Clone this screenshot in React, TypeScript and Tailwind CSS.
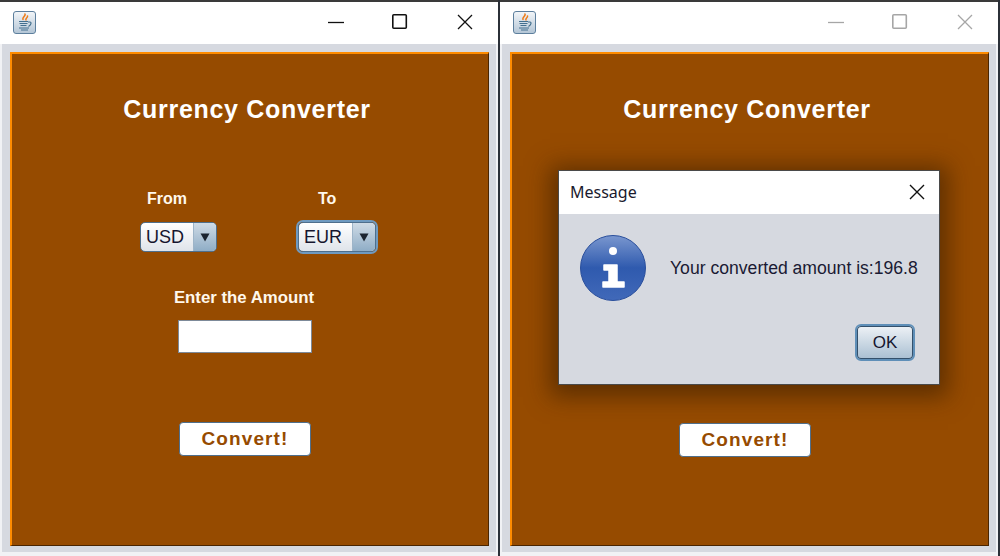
import type { ReactNode } from "react";

const sans = "font-['Liberation_Sans',Arial,sans-serif]";

function JavaIcon() {
  return (
    <div className="flex h-[23px] w-[23px] items-center justify-center rounded-[3px] border border-[#5d7f9d] bg-gradient-to-b from-[#f2f5f8] to-[#b4c6d6]">
      <svg width="17" height="19" viewBox="0 0 17 19" fill="none">
        <path d="M9 1c1 2-3 3-2 5.500M11.500 3c.5 2-2.500 2-1.500 4" stroke="#ee7a16" strokeWidth="1.500" strokeLinecap="round" />
        <path d="M3 8.500h9M3.500 10.500h8M4.500 12.500h6" stroke="#44708f" strokeWidth="1.200" />
        <path d="M12 9h2c1.500 0 1.500 3-1.500 4.500" stroke="#44708f" strokeWidth="1.200" />
        <path d="M3 15h10M5 17h7" stroke="#44708f" strokeWidth="1.200" />
      </svg>
    </div>
  );
}

function TitleButtons({ dim }: { dim?: boolean }) {
  const stroke = dim ? "#a6a6a6" : "#111111";
  return (
    <div className="flex items-center">
      <svg width="16" height="16" viewBox="0 0 16 16" className="mr-[48px]">
        <path d="M0 8.500h16" stroke={stroke} strokeWidth="1.300" />
      </svg>
      <svg width="16" height="16" viewBox="0 0 16 16" className="mr-[49px]">
        <rect x="0.800" y="0.800" width="13.500" height="13.500" rx="1" fill="none" stroke={stroke} strokeWidth="1.600" />
      </svg>
      <svg width="16" height="16" viewBox="0 0 16 16">
        <path d="M1 1l14 14M15 1L1 15" stroke={stroke} strokeWidth="1.300" />
      </svg>
    </div>
  );
}

function Combo({ value, focused }: { value: string; focused?: boolean }) {
  return (
    <div className={`flex h-[30px] overflow-hidden rounded-[5px] border border-[#4f6f8c] bg-gradient-to-b from-[#ffffff] to-[#dfe4ea] ${focused ? "w-[78px] shadow-[0_0_0_2px_#6f9ac0]" : "w-[77px]"}`}>
      <div className={`${sans} flex flex-1 items-center pl-[5px] text-[18px] text-[#15152e]`}>{value}</div>
      <div className="flex w-[23px] items-center justify-center border-l border-[#9db4c8] bg-gradient-to-b from-[#cfdbe6] to-[#8fadc6]">
        <svg width="10" height="9" viewBox="0 0 10 9">
          <path d="M0.500 0.500h9L5 8.500z" fill="#1b2430" />
        </svg>
      </div>
    </div>
  );
}

function Dialog() {
  return (
    <div className="absolute left-[46px] top-[116px] w-[382px] border border-[#4a4a4a] bg-[#d6d9e0] shadow-[0_4px_22px_8px_rgba(50,25,0,0.55)]">
      <div className="flex h-[43px] items-center justify-between bg-white pb-[1px] pl-[11px] pr-[14px] font-['Noto_Sans',sans-serif] text-[16px] text-[#1a1a2e]">
        <span>Message</span>
        <svg width="16" height="16" viewBox="0 0 16 16">
          <path d="M1 1l14 14M15 1L1 15" stroke="#111111" strokeWidth="1.400" />
        </svg>
      </div>
      <div className="flex h-[170px] flex-col px-[21px] pt-[21px]">
        <div className="flex items-center">
          <svg width="66" height="66" viewBox="0 0 66 66" className="mr-[24px]">
            <defs>
              <linearGradient id="infoBg" x1="0" y1="0" x2="0" y2="1">
                <stop offset="0" stopColor="#7a97cf" />
                <stop offset="0.5" stopColor="#2f5aae" />
                <stop offset="1" stopColor="#4169b9" />
              </linearGradient>
            </defs>
            <circle cx="33" cy="33" r="32.500" fill="url(#infoBg)" stroke="#2a4f9c" />
            <circle cx="33" cy="16" r="4" fill="#ffffff" />
            <path d="M24 30h13v17h7v5H23v-5h6V35h-5z" fill="#ffffff" stroke="#ffffff" strokeWidth="1.500" strokeLinejoin="round" />
          </svg>
          <span className={`${sans} text-[17.600px] text-[#1a1a33]`}>Your converted amount is:196.8</span>
        </div>
        <div className="mt-[23px] flex justify-end pr-[3px]">
          <div className={`${sans} flex h-[37px] w-[60px] items-center justify-center rounded-[6px] border-2 border-[#5f8fb8] bg-gradient-to-b from-[#eef2f6] to-[#a9bfd2] text-[17px] text-[#15152e] ring-1 ring-inset ring-[#34506b]`}>
            OK
          </div>
        </div>
      </div>
    </div>
  );
}

function Window({ dim, dropY = 0, children }: { dim?: boolean; dropY?: number; children?: ReactNode }) {
  return (
    <div className="flex h-[556px] w-[498px] flex-col border-t-2 border-[#3a3a3a] bg-[#f1f2f5]">
      <div className="flex h-[42px] shrink-0 items-center justify-between bg-white pb-[2px] pl-[13px] pr-[25px]">
        <JavaIcon />
        <TitleButtons dim={dim} />
      </div>
      <div className="mx-[2px] mb-[4px] flex-1 bg-[#d6d9e0] pl-[8px] pr-[7px] pt-[8px]">
        <div className={`relative flex h-[494px] flex-col border-b border-l-2 border-r border-t-2 border-b-[#4a2500] border-l-[#ff8c00] border-r-[#4a2500] border-t-[#ff8c00] bg-[#964b00] ${sans}`}>
          <h1 className="mt-[41px] h-[28px] pr-[6px] text-center text-[25px] font-bold leading-[28px] tracking-[0.7px] text-white">
            Currency Converter
          </h1>
          <div className={`mt-[65px] flex pl-[128px] ${children ? "invisible" : ""}`}>
            <div className="flex flex-col">
              <span className="h-[22px] pl-[7px] text-[16px] font-bold leading-[22px] text-[#fff8ec]">From</span>
              <div className="mt-[12px]">
                <Combo value="USD" />
              </div>
            </div>
            <div className="ml-[81px] flex flex-col">
              <span className="h-[22px] pl-[20px] text-[16px] font-bold leading-[22px] text-[#fff8ec]">To</span>
              <div className="mt-[12px]">
                <Combo value="EUR" focused />
              </div>
            </div>
          </div>
          <div className={`flex flex-col items-center pr-[12px] ${children ? "invisible" : ""}`}>
            <span className="mt-[35px] h-[22px] text-[16.800px] font-bold leading-[22px] text-[#fff8ec]">Enter the Amount</span>
            <div className="ml-[2px] mt-[11px] h-[33px] w-[134px] border border-[#7d8a99] bg-white" />
          </div>
          <div className="flex justify-center pr-[10px]" style={{ marginTop: 69 + dropY }}>
            <div className="flex h-[34px] w-[132px] items-center justify-center rounded-[4px] border border-[#4f6f8c] bg-white text-[19px] font-bold tracking-[1.1px] text-[#964b00]">
              Convert!
            </div>
          </div>
          {children}
        </div>
      </div>
    </div>
  );
}

export default function App() {
  return (
    <div className="flex h-[556px] w-[1000px] overflow-hidden bg-[#2b3038]">
      <Window />
      <div className="w-[2px]" />
      <Window dim dropY={1}>
        <Dialog />
      </Window>
    </div>
  );
}
